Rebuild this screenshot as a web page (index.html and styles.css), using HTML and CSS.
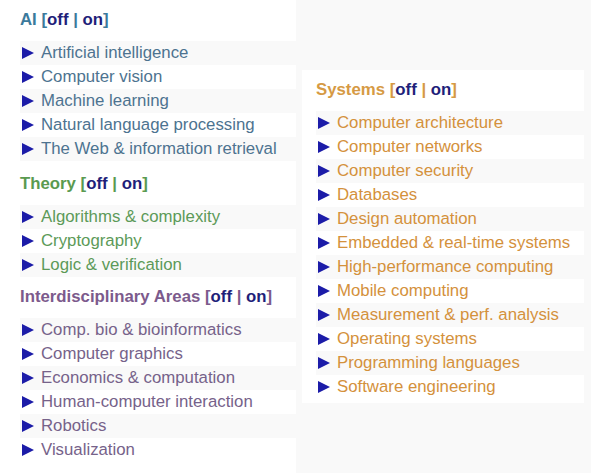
FILE: index.html
```html
<!DOCTYPE html>
<html>
<head>
<meta charset="utf-8">
<link rel="stylesheet" href="styles.css">
</head>
<body>
<div class="page">
  <div class="col left">
    <div class="group ai">
      <div class="head">AI [<span class="tg">off</span> | <span class="tg">on</span>]</div>
      <ul>
        <li><span class="tri"></span>Artificial intelligence</li>
        <li><span class="tri"></span>Computer vision</li>
        <li><span class="tri"></span>Machine learning</li>
        <li><span class="tri"></span>Natural language processing</li>
        <li><span class="tri"></span>The Web &amp; information retrieval</li>
      </ul>
    </div>
    <div class="group theory">
      <div class="head">Theory [<span class="tg">off</span> | <span class="tg">on</span>]</div>
      <ul>
        <li><span class="tri"></span>Algorithms &amp; complexity</li>
        <li><span class="tri"></span>Cryptography</li>
        <li><span class="tri"></span>Logic &amp; verification</li>
      </ul>
    </div>
    <div class="group inter">
      <div class="head">Interdisciplinary Areas [<span class="tg">off</span> | <span class="tg">on</span>]</div>
      <ul>
        <li><span class="tri"></span>Comp. bio &amp; bioinformatics</li>
        <li><span class="tri"></span>Computer graphics</li>
        <li><span class="tri"></span>Economics &amp; computation</li>
        <li><span class="tri"></span>Human-computer interaction</li>
        <li><span class="tri"></span>Robotics</li>
        <li><span class="tri"></span>Visualization</li>
      </ul>
    </div>
  </div>
  <div class="col right">
    <div class="card">
      <div class="group systems">
        <div class="head">Systems [<span class="tg">off</span> | <span class="tg">on</span>]</div>
        <ul>
          <li><span class="tri"></span>Computer architecture</li>
          <li><span class="tri"></span>Computer networks</li>
          <li><span class="tri"></span>Computer security</li>
          <li><span class="tri"></span>Databases</li>
          <li><span class="tri"></span>Design automation</li>
          <li><span class="tri"></span>Embedded &amp; real-time systems</li>
          <li><span class="tri"></span>High-performance computing</li>
          <li><span class="tri"></span>Mobile computing</li>
          <li><span class="tri"></span>Measurement &amp; perf. analysis</li>
          <li><span class="tri"></span>Operating systems</li>
          <li><span class="tri"></span>Programming languages</li>
          <li><span class="tri"></span>Software engineering</li>
        </ul>
      </div>
    </div>
  </div>
</div>
</body>
</html>
```
FILE: styles.css
```css
html, body {
  margin: 0;
  padding: 0;
  background: #f9f9f9;
}
body {
  font-family: "Liberation Sans", Arial, sans-serif;
  font-size: 16.8px;
}
.page {
  display: flex;
  min-height: 473px;
  align-items: stretch;
}
.left {
  width: 276px;
  padding: 8px 0 0 20px;
  background: #ffffff;
  box-sizing: content-box;
}
.right {
  padding-left: 6px;
  padding-top: 70px;
}
.card {
  width: 268px;
  background: #ffffff;
  padding: 8px 0 4px 14px;
}
.theory {
  margin-top: 11px;
}
.inter {
  margin-top: 8px;
}
.head {
  height: 24px;
  line-height: 24px;
  font-weight: bold;
  margin-bottom: 9px;
}
.tg {
  color: #1f1f7a;
}
ul {
  list-style: none;
  margin: 0;
  padding: 0;
}
li {
  height: 24px;
  line-height: 24px;
  display: flex;
  align-items: center;
  white-space: nowrap;
}
li:nth-child(odd) {
  background: #f9f9f9;
}
.tri {
  display: inline-block;
  width: 0;
  height: 0;
  border-left: 12px solid #1c1ca8;
  border-top: 6px solid transparent;
  border-bottom: 6px solid transparent;
  margin-left: 2px;
  margin-right: 7px;
}
.ai .head { color: #3b7a9c; }
.ai li { color: #4d7390; }
.theory .head { color: #5a9a50; }
.theory li { color: #5c9a58; }
.inter .head { color: #7c5a8c; }
.inter li { color: #76628a; }
.systems .head { color: #d69a44; }
.systems li { color: #d4913c; }
```
